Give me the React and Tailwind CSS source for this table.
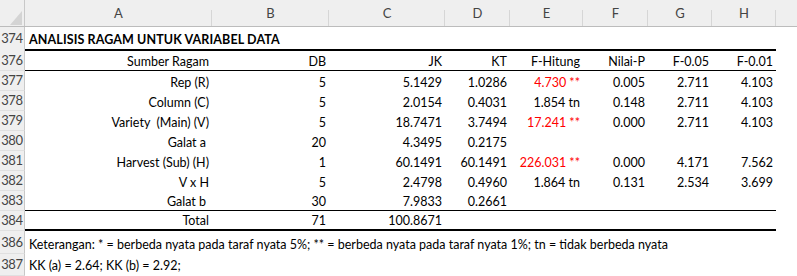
import React from "react";

const COLS = "grid-cols-[187px_117px_116px_65px_73px_65px_64px_64px]";

function RowHead({ n, h, border = true }) {
  return (
    <div
      className={`w-[25px] shrink-0 flex items-center justify-center bg-[#efefef] border-r border-[#c8c8c8] text-[#444] text-[13px] tracking-[-0.3px] ${border ? "border-b border-b-[#e0e0e0]" : ""}`}
      style={{ height: h }}
    >
      {n}
    </div>
  );
}

function Cell({ children, cls = "" }) {
  return (
    <div className={`flex items-end pb-[2px] justify-end pr-[3px] whitespace-nowrap ${cls}`}>
      {children}
    </div>
  );
}

function DataRow({ n, cells, h = 20, bottom = "" }) {
  return (
    <div className="flex" style={{ height: h }}>
      <RowHead n={n} h={h} />
      <div className={`w-[751px] grid ${COLS} ${bottom}`}>
        {cells.map((c, i) => (
          <Cell key={i} cls={i === 0 && c && c.pad ? "pr-[6px]" : ""}>
            {c && c.v !== undefined ? c.v : c}
          </Cell>
        ))}
      </div>
    </div>
  );
}

const Red = ({ children }) => <span className="text-[#ff0000]">{children}</span>;

export default function App() {
  const letters = ["A", "B", "C", "D", "E", "F", "G", "H"];
  return (
    <div
      className="w-[797px] h-[276px] bg-white overflow-hidden text-[12.5px] leading-none text-black"
      style={{ fontFamily: "Lato, 'Open Sans', sans-serif" }}
    >
      {/* column header */}
      <div className="flex h-[27px] bg-[#efefef] border-b border-[#bcbcbc]">
        <div className="w-[25px] shrink-0 relative border-r border-[#c8c8c8]">
          <svg className="absolute left-[10px] top-[11px]" width="13" height="14" viewBox="0 0 13 14">
            <polygon points="12,0 12,14 0,14" fill="#d4d4d4" />
          </svg>
        </div>
        <div className={`w-[751px] grid ${COLS}`}>
          {letters.map((l) => (
            <div key={l} className="relative flex items-center justify-center text-[#444] text-[13px] pt-[1px]">
              {l}
              <div className="absolute right-0 top-[10px] bottom-0 w-px bg-[#d6d6d6]" />
            </div>
          ))}
        </div>
        <div className="flex-1" />
      </div>

      {/* 374 */}
      <div className="flex h-[22px]">
        <RowHead n="374" h={22} border={false} />
        <div className="w-[751px] flex items-end pb-[3px] pl-[4px] font-bold tracking-[0.1px]">
          ANALISIS RAGAM UNTUK VARIABEL DATA
        </div>
      </div>
      <div className="flex h-[2px]">
        <div className="w-[25px] shrink-0 bg-[#efefef] border-r border-[#c8c8c8]" />
        <div className="w-[751px] bg-black" />
      </div>

      <DataRow
        n="376"
        h={20}
        bottom="border-b border-black"
        cells={["Sumber Ragam", "DB", "JK", "KT", "F-Hitung", "Nilai-P", "F-0.05", "F-0.01"]}
      />
      <DataRow
        n="377"
        cells={["Rep (R)", "5", "5.1429", "1.0286", <Red>4.730 **</Red>, "0.005", "2.711", "4.103"]}
      />
      <DataRow
        n="378"
        cells={["Column (C)", "5", "2.0154", "0.4031", "1.854 tn", "0.148", "2.711", "4.103"]}
      />
      <DataRow
        n="379"
        cells={[<span className="whitespace-pre">Variety  (Main) (V)</span>, "5", "18.7471", "3.7494", <Red>17.241 **</Red>, "0.000", "2.711", "4.103"]}
      />
      <DataRow
        n="380"
        cells={[{ v: "Galat a", pad: true }, "20", "4.3495", "0.2175", "", "", "", ""]}
      />
      <DataRow
        n="381"
        cells={["Harvest (Sub) (H)", "1", "60.1491", "60.1491", <Red>226.031 **</Red>, "0.000", "4.171", "7.562"]}
      />
      <DataRow
        n="382"
        cells={["V x H", "5", "2.4798", "0.4960", "1.864 tn", "0.131", "2.534", "3.699"]}
      />
      <DataRow
        n="383"
        h={20}
        bottom="border-b border-black"
        cells={[{ v: "Galat b", pad: true }, "30", "7.9833", "0.2661", "", "", "", ""]}
      />
      <DataRow
        n="384"
        h={20}
        bottom="border-b-2 border-black"
        cells={["Total", "71", "100.8671", "", "", "", "", ""]}
      />

      <div className="flex h-[23px]">
        <RowHead n="386" h={23} />
        <div className="flex-1 flex items-end pb-[3px] pl-[4px] whitespace-nowrap">
          Keterangan: * = berbeda nyata pada taraf nyata 5%; ** = berbeda nyata pada taraf nyata 1%; tn = tidak berbeda nyata
        </div>
      </div>
      <div className="flex h-[22px]">
        <RowHead n="387" h={22} />
        <div className="flex-1 flex items-end pb-[4px] pl-[4px] whitespace-nowrap">
          KK (a) = 2.64; KK (b) = 2.92;
        </div>
      </div>
    </div>
  );
}
